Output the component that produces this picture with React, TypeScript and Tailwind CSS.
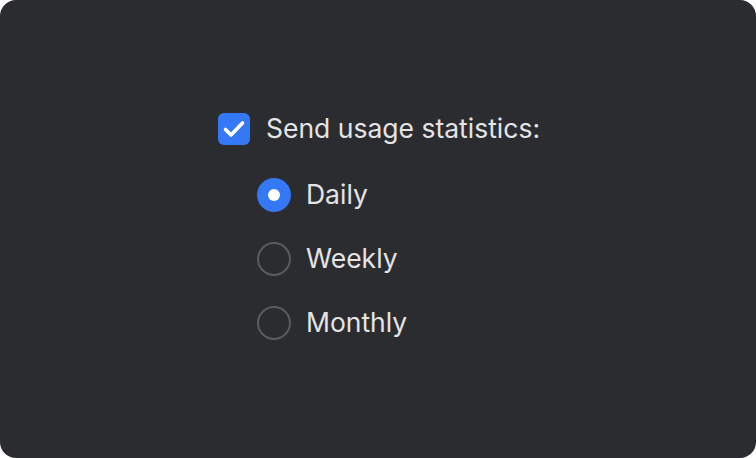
import { useState } from 'react';

const OPTIONS = ['Daily', 'Weekly', 'Monthly'];

function App() {
  const [enabled, setEnabled] = useState(true);
  const [freq, setFreq] = useState('Daily');

  return (
    <div className="w-[756px] h-[458px] bg-white font-['Inter',sans-serif]">
      <div className="w-full h-full rounded-[16px] bg-[#2b2c30] flex items-center justify-center">
        <div className="flex flex-col -mt-[6px] ml-[2px]">
          {/* Checkbox */}
          <label className="flex items-center gap-4 h-8 cursor-pointer">
            <button
              type="button"
              onClick={() => setEnabled(!enabled)}
              className="w-8 h-8 rounded-[6px] bg-[#3478f6] flex items-center justify-center"
            >
              {enabled && (
                <svg width="24" height="24" viewBox="0 0 24 24" fill="none">
                  <path d="M3.5 12.5l5.5 5.5L20.5 6" stroke="white" strokeWidth="3.6" strokeLinecap="round" strokeLinejoin="round" />
                </svg>
              )}
            </button>
            <span className="text-[26.5px] text-[#e4e4e7] leading-none">Send usage statistics:</span>
          </label>

          {/* Radio group */}
          <div className="flex flex-col gap-[30px] mt-[33px] pl-[39px]">
            {OPTIONS.map((opt) => {
              const active = freq === opt;
              return (
                <label key={opt} className="flex items-center gap-[15px] h-[34px] cursor-pointer" onClick={() => setFreq(opt)}>
                  {active ? (
                    <span className="w-[34px] h-[34px] rounded-full bg-[#3478f6] flex items-center justify-center">
                      <span className="w-[12px] h-[12px] rounded-full bg-white" />
                    </span>
                  ) : (
                    <span className="w-[34px] h-[34px] rounded-full border-2 border-[#5a5b60]" />
                  )}
                  <span className="text-[26.5px] text-[#e4e4e7] leading-none">{opt}</span>
                </label>
              );
            })}
          </div>
        </div>
      </div>
    </div>
  );
}

export default App;
